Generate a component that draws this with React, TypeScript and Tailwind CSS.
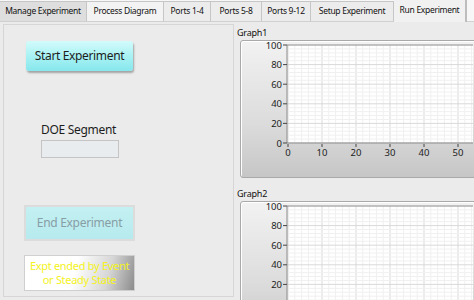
const tabs = [
  { label: "Manage Experiment", w: "w-[87px]", bg: "bg-[#dedede]" },
  { label: "Process Diagram", w: "w-[77px]", bg: "bg-[#f3f3f3]" },
  { label: "Ports 1-4", w: "w-[47px]", bg: "bg-[#ececec]" },
  { label: "Ports 5-8", w: "w-[51px]", bg: "bg-[#ececec]" },
  { label: "Ports 9-12", w: "w-[49px]", bg: "bg-[#ececec]" },
  { label: "Setup Experiment", w: "w-[83px]", bg: "bg-[#ececec]" },
]

function TabBar() {
  return (
    <div className="flex h-[22px] items-end border-b border-[#d0d0d0] bg-[#f7f7f7]">
      {tabs.map((t) => (
        <div
          key={t.label}
          className={`flex h-[20px] ${t.w} ${t.bg} shrink-0 items-center justify-center border-r border-t border-[#c6c6c6] text-[8.5px] tracking-[-0.3px] text-[#111]`}
        >
          {t.label}
        </div>
      ))}
      <div className="mb-[-1px] flex h-[22px] w-[73px] shrink-0 items-center justify-center border-r-2 border-[#bdbdbd] bg-[#f1f1f1] pb-[2px] text-[8.5px] tracking-[-0.3px] text-[#111]">
        Run Experiment
      </div>
    </div>
  )
}

function Chart() {
  const left = 46
  const top = 4
  const h = 98
  const right = 232
  const yFor = (v: number) => top + ((100 - v) / 100) * h
  const xFor = (v: number) => left + 1 + (v / 10) * 34
  const minorX: number[] = []
  for (let x = xFor(0); x < right; x += 6.8) minorX.push(x)
  const minorY: number[] = []
  for (let i = 0; i <= 25; i++) minorY.push(top + i * 3.92)

  return (
    <svg width="235" height="136" className="block">
      <rect x={left} y={top} width={right - left} height={h} fill="#ffffff" />
      {minorX.map((x, i) => (
        <line key={`mx${i}`} x1={x} x2={x} y1={top} y2={top + h} stroke={i % 5 === 0 ? "#d9d9d9" : "#f0f0f0"} strokeWidth="1" />
      ))}
      {minorY.map((y, i) => (
        <line key={`my${i}`} x1={left} x2={right} y1={y} y2={y} stroke={i % 5 === 0 ? "#d9d9d9" : "#f0f0f0"} strokeWidth="1" />
      ))}
      <line x1={left} x2={right} y1={top} y2={top} stroke="#9a9a9a" />
      <line x1={left} x2={right} y1={top + h} y2={top + h} stroke="#8a8a8a" />
      <line x1={left} x2={left} y1={top} y2={top + h} stroke="#8a8a8a" />
      {[100, 80, 60, 40, 20, 0].map((v) => (
        <g key={`y${v}`}>
          <line x1={left - 4} x2={left} y1={yFor(v)} y2={yFor(v)} stroke="#444" />
          <text x={left - 5} y={yFor(v) + 3.5} textAnchor="end" fontSize="9.5" fill="#222" fontFamily="'Noto Sans', sans-serif">
            {v}
          </text>
        </g>
      ))}
      {[0, 10, 20, 30, 40, 50].map((v) => (
        <g key={`x${v}`}>
          <line x1={xFor(v)} x2={xFor(v)} y1={top + h + 1} y2={top + h + 4} stroke="#444" />
          <text x={xFor(v)} y={top + h + 13} textAnchor="middle" fontSize="9.5" fill="#222" fontFamily="'Noto Sans', sans-serif">
            {v}
          </text>
        </g>
      ))}
    </svg>
  )
}

function GraphFrame({ label }: { label: string }) {
  return (
    <div className="flex flex-col">
      <div className="ml-[3px] h-[15px] text-[9px] leading-[16px] tracking-[-0.2px] text-[#111]">{label}</div>
      <div className="ml-[6px] h-[138px] w-[240px] rounded-[3px] border border-[#a9a9a9] bg-[linear-gradient(180deg,#f2f2f2_0%,#dcdcdc_60%,#c6c6c6_100%)] shadow-[inset_1px_1px_0_#ffffff]">
        <Chart />
      </div>
    </div>
  )
}

export default function App() {
  return (
    <div className="h-[300px] w-[474px] overflow-hidden bg-[#ebebeb] font-['Noto_Sans',sans-serif]">
      <TabBar />
      <div className="flex">
        <div className="ml-[3px] mt-[2px] flex h-[273px] w-[231px] shrink-0 flex-col border border-[#d6d6d6]">
          <div className="ml-[22px] mt-[16px] flex h-[30px] w-[107px] items-center justify-center rounded-[3px] bg-[linear-gradient(180deg,#d2fbfb_0%,#a6f1f3_55%,#86e7ec_100%)] text-[12px] tracking-[-0.35px] text-[#1d1d1d] shadow-[1px_2px_2px_rgba(0,0,0,0.3)]">
            Start Experiment
          </div>
          <div className="ml-[37px] mt-[50px] text-[12px] leading-[17px] tracking-[-0.3px] text-[#1d1d1d]">DOE Segment</div>
          <div className="ml-[37px] mt-[2px] h-[18px] w-[78px] border border-[#c4c4c4] bg-[#e9ecee]" />
          <div className="ml-[20px] mt-[47px] flex h-[36px] w-[111px] items-center justify-center border-2 border-[#dcdcdc] bg-[linear-gradient(180deg,#c4f0f2_0%,#b6eaee_100%)] text-[12px] tracking-[-0.3px] text-[#879ea5]">
            End Experiment
          </div>
          <div className="ml-[20px] mt-[14px] flex h-[36px] w-[111px] flex-col items-center justify-center border border-[#cfcfcf] bg-[linear-gradient(105deg,#ffffff_0%,#ffffff_45%,#d6d6d6_75%,#8c8c8c_100%)] text-[11px] leading-[14px] tracking-[-0.3px] text-[#f3f21c]">
            <span>Expt ended by Event</span>
            <span>or Steady State</span>
          </div>
        </div>
        <div className="flex flex-col pt-[3px]">
          <GraphFrame label="Graph1" />
          <div className="h-[8px]" />
          <GraphFrame label="Graph2" />
        </div>
      </div>
    </div>
  )
}
